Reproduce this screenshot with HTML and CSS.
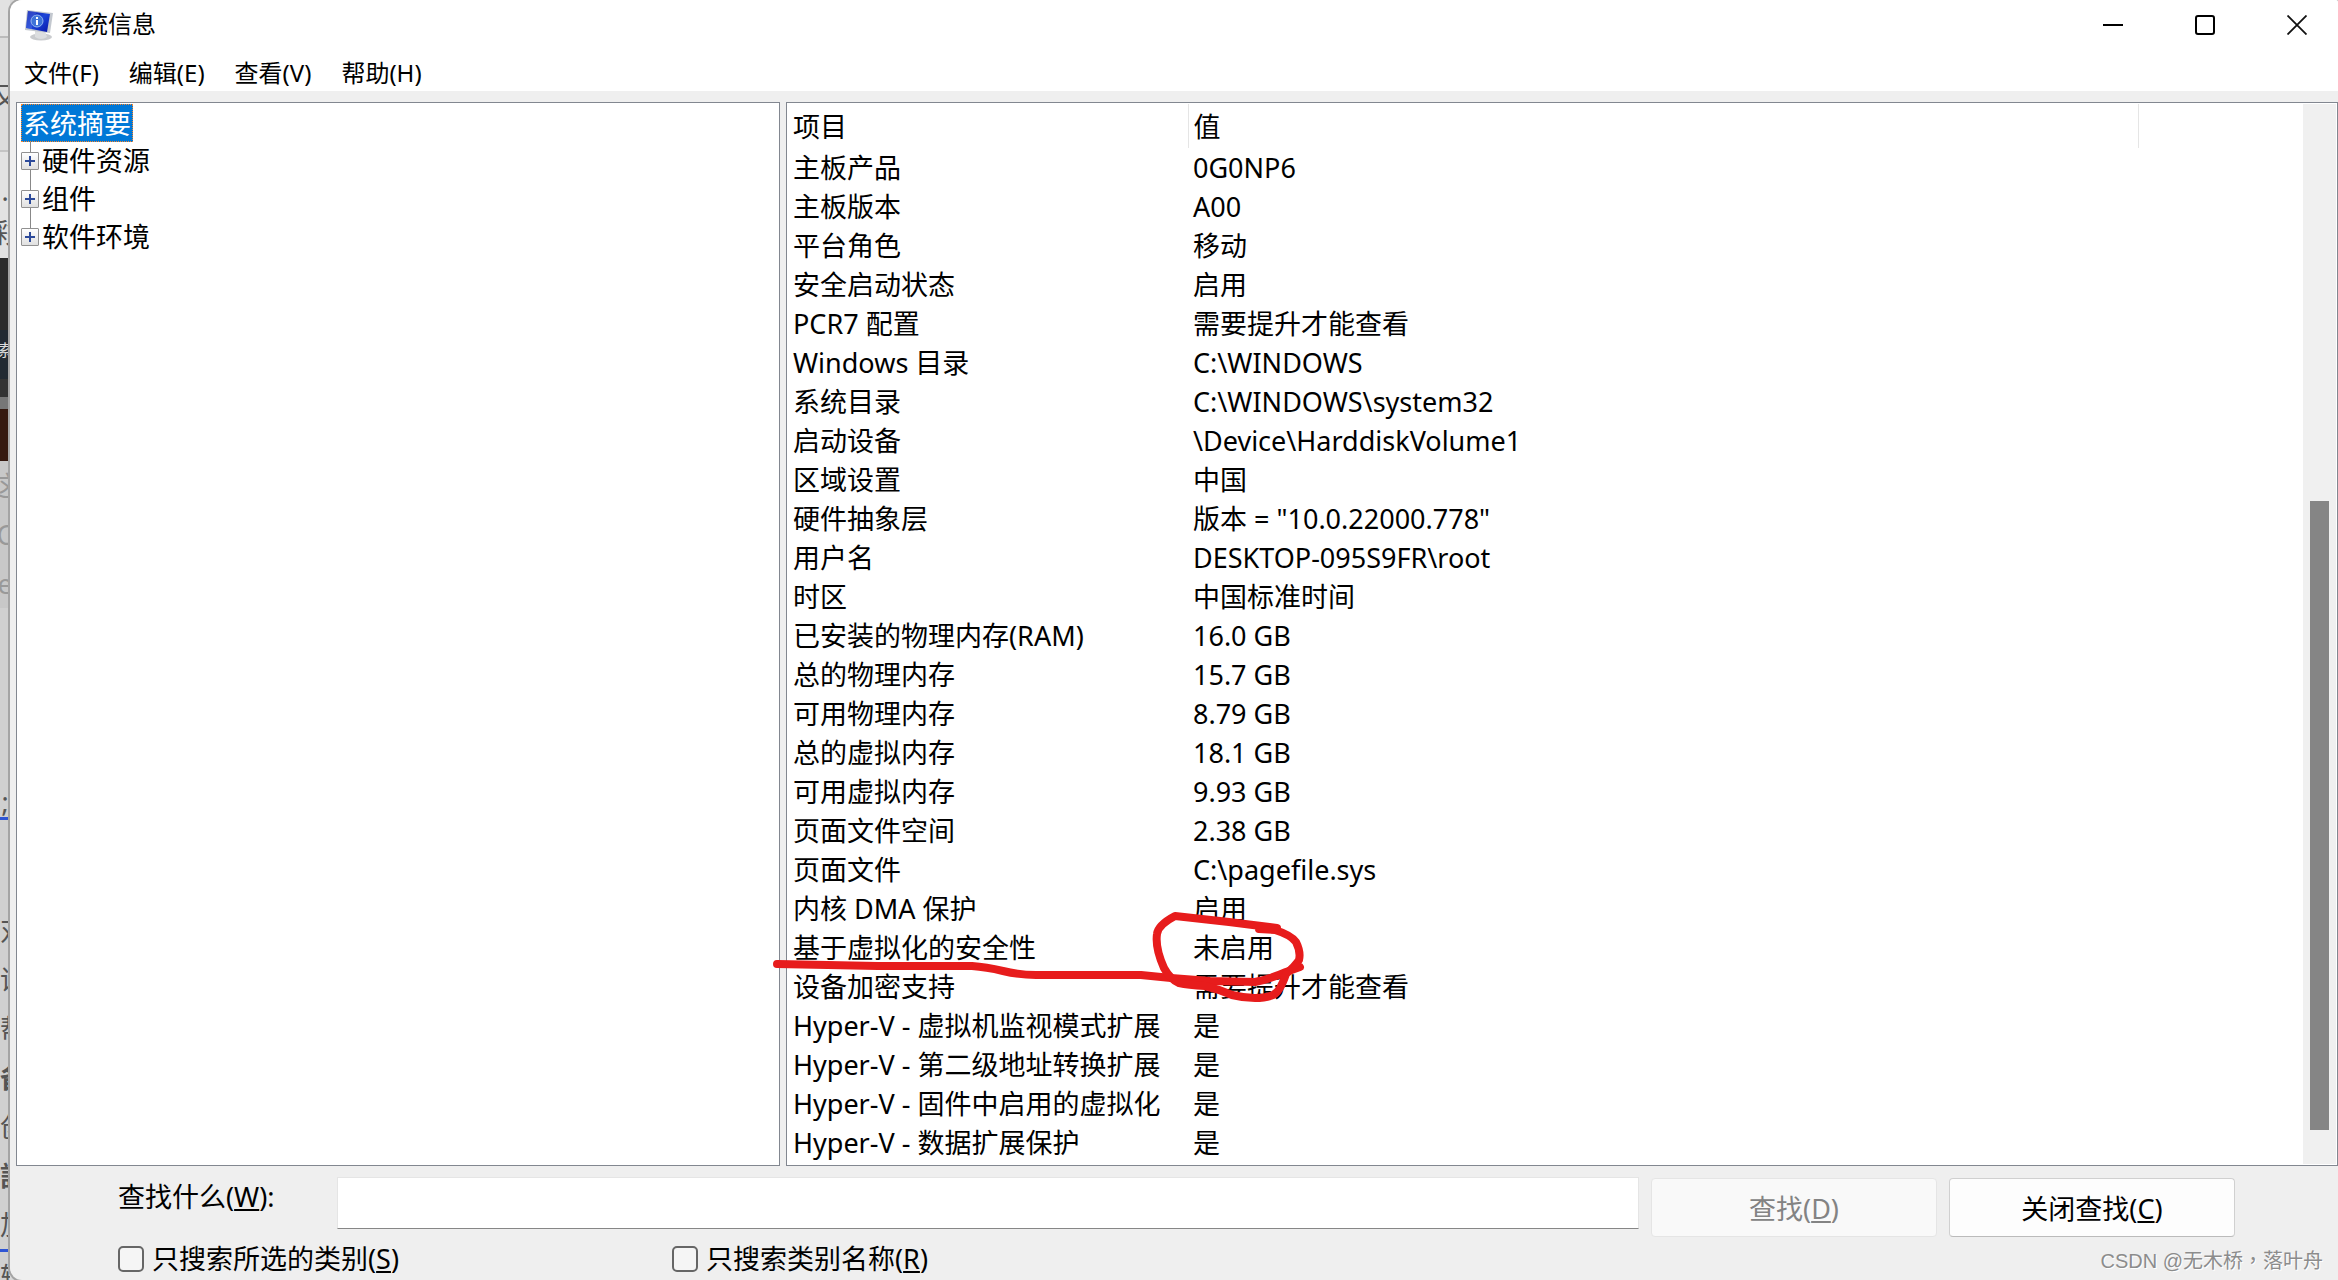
FILE: index.html
```html
<!DOCTYPE html>
<html lang="zh-CN">
    <head>
        <meta charset="utf-8">
        <title>系统信息</title>
        <link rel="stylesheet" href="styles.css">
    </head>
    <body>
        <div class="desktop" aria-hidden="true">
            <div class="strip strip-top"></div>
            <div class="strip strip-tab"><span>又</span></div>
            <div class="strip strip-page"><span>·</span><span>彩</span></div>
            <div class="strip strip-dark"></div>
            <div class="strip strip-navy"><span>索</span></div>
            <div class="strip strip-shade"></div>
            <div class="strip strip-brown"></div>
            <div class="strip strip-fade"><span>这</span><span>C</span><span>e</span></div>
            <div class="strip strip-blank"><span>;</span></div>
            <div class="strip strip-text">
                <span>对</span><span>谁</span><span>帮</span><b>备</b><span>创</span><b>詣</b><span class="linked">加</span><span>辑</span>
            </div>
        </div>

        <div class="window">
            <header class="titlebar">
                <svg class="app-icon" viewBox="0 0 30 32" width="30" height="32">
                    <defs>
                        <linearGradient id="screen" x1="0" y1="0" x2="1" y2="1">
                            <stop offset="0" stop-color="#0a14a0"/>
                            <stop offset="0.5" stop-color="#1c45d8"/>
                            <stop offset="1" stop-color="#0614a8"/>
                        </linearGradient>
                    </defs>
                    <ellipse cx="17" cy="28" rx="11" ry="3.5" fill="#c9cbce"/>
                    <path d="M11 20l10 2 2 6q-6 4-12 0z" fill="#dcdee0"/>
                    <path d="M3 1l26 3-3 20L1 21z" fill="#c3c8cf"/>
                    <path d="M4 2l22 3-3 18L2 19z" fill="url(#screen)"/>
                    <path d="M2 19L4 2l9 1q-6 6-5 17z" fill="#5a7be8" opacity="0.4"/>
                    <circle cx="13" cy="12" r="6" fill="#3f74d8" stroke="#93b5f0"/>
                    <path d="M13 8v2M13 11v5" stroke="#fff" stroke-width="2"/>
                </svg>
                <span class="title">系统信息</span>
                <div class="window-buttons">
                    <button aria-label="最小化"><svg width="20" height="20"><path d="M0 10h20" stroke="#000" stroke-width="2"/></svg></button>
                    <button aria-label="最大化"><svg width="20" height="20"><rect x="1" y="1" width="18" height="18" rx="2" fill="none" stroke="#000" stroke-width="2"/></svg></button>
                    <button aria-label="关闭"><svg width="20" height="20"><path d="M0.5 0.5l19 19M19.5 0.5l-19 19" stroke="#111" stroke-width="1.8"/></svg></button>
                </div>
            </header>

            <nav class="menu">
                <button>文件(F)</button>
                <button>编辑(E)</button>
                <button>查看(V)</button>
                <button>帮助(H)</button>
            </nav>

            <main class="panes">
                <ul class="tree">
                    <li><a href="#" class="selected">系统摘要</a></li>
                    <li class="branch"><button class="expand" aria-label="展开"></button><a href="#">硬件资源</a></li>
                    <li class="branch"><button class="expand" aria-label="展开"></button><a href="#">组件</a></li>
                    <li class="branch"><button class="expand" aria-label="展开"></button><a href="#">软件环境</a></li>
                </ul>

                <section class="details">
                    <table>
                        <thead>
                            <tr><th class="col-item">项目</th><th class="col-value">值</th><th></th></tr>
                        </thead>
                        <tbody>
                            <tr><td>主板产品</td><td>0G0NP6</td></tr>
                            <tr><td>主板版本</td><td>A00</td></tr>
                            <tr><td>平台角色</td><td>移动</td></tr>
                            <tr><td>安全启动状态</td><td>启用</td></tr>
                            <tr><td>PCR7 配置</td><td>需要提升才能查看</td></tr>
                            <tr><td>Windows 目录</td><td>C:\WINDOWS</td></tr>
                            <tr><td>系统目录</td><td>C:\WINDOWS\system32</td></tr>
                            <tr><td>启动设备</td><td>\Device\HarddiskVolume1</td></tr>
                            <tr><td>区域设置</td><td>中国</td></tr>
                            <tr><td>硬件抽象层</td><td>版本 = "10.0.22000.778"</td></tr>
                            <tr><td>用户名</td><td>DESKTOP-095S9FR\root</td></tr>
                            <tr><td>时区</td><td>中国标准时间</td></tr>
                            <tr><td>已安装的物理内存(RAM)</td><td>16.0 GB</td></tr>
                            <tr><td>总的物理内存</td><td>15.7 GB</td></tr>
                            <tr><td>可用物理内存</td><td>8.79 GB</td></tr>
                            <tr><td>总的虚拟内存</td><td>18.1 GB</td></tr>
                            <tr><td>可用虚拟内存</td><td>9.93 GB</td></tr>
                            <tr><td>页面文件空间</td><td>2.38 GB</td></tr>
                            <tr><td>页面文件</td><td>C:\pagefile.sys</td></tr>
                            <tr><td>内核 DMA 保护</td><td>启用</td></tr>
                            <tr><td>基于虚拟化的安全性</td><td>未启用</td></tr>
                            <tr><td>设备加密支持</td><td>需要提升才能查看</td></tr>
                            <tr><td>Hyper-V - 虚拟机监视模式扩展</td><td>是</td></tr>
                            <tr><td>Hyper-V - 第二级地址转换扩展</td><td>是</td></tr>
                            <tr><td>Hyper-V - 固件中启用的虚拟化</td><td>是</td></tr>
                            <tr><td>Hyper-V - 数据扩展保护</td><td>是</td></tr>
                        </tbody>
                    </table>
                    <div class="scrollbar"><div class="thumb"></div></div>

                    <!-- red pen marks -->
                    <svg class="marks" viewBox="765 905 560 105" width="560" height="105">
                        <path d="M779 964L880 966L974 966Q988 967 1005 971Q1022 975 1038 975L1143 975L1173 978L1212 981L1257 982Q1272 979 1288 972L1302 967"/>
                        <path d="M1261 929L1277 930Q1293 935 1298 942Q1303 952 1301 960Q1298 965 1288 974Q1282 992 1275 995Q1268 998 1257 998Q1246 998 1234 995Q1220 989 1207 986Q1190 985 1181 983Q1172 979 1166 968Q1157 948 1159 934Q1160 925 1177 916L1231 922L1279 928"/>
                    </svg>
                </section>
            </main>

            <form class="find">
                <div class="find-row">
                    <label class="find-label" for="what">查找什么(<u>W</u>):</label>
                    <input type="text" id="what">
                    <button type="button" disabled>查找(<u>D</u>)</button>
                    <button type="button">关闭查找(<u>C</u>)</button>
                </div>
                <div class="check-row">
                    <div class="check"><input type="checkbox" id="selectedOnly"><label for="selectedOnly">只搜索所选的类别(<u>S</u>)</label></div>
                    <div class="check"><input type="checkbox" id="namesOnly"><label for="namesOnly">只搜索类别名称(<u>R</u>)</label></div>
                    <span class="watermark" lang="zh-TW">CSDN @无木桥，落叶舟</span>
                </div>
            </form>
        </div>
    </body>
</html>
```
FILE: styles.css
```css
* {
    box-sizing: border-box;
}

body {
    display: flex;
    height: 100vh;
    margin: 0;
    overflow: hidden;
    background-color: #d8d8d8;
    color: #000;
    font-family: "Noto Sans", "Noto Sans CJK SC", sans-serif;
    font-size: 27px;
}

button,
input {
    font: inherit;
    color: inherit;
}

/* page behind the window */
.desktop {
    width: 10px;
    flex: none;
    height: 100vh;
    overflow: hidden;
    background-color: #d0d0d0;
    color: #555;
}

.strip {
    display: flex;
    flex-direction: column;
    align-items: center;
    overflow: hidden;
    line-height: 40px;
}

.strip-top {
    height: 38px;
    background-color: #e2e2e2;
    border-bottom: 2px solid #bbb;
}

.strip-tab {
    height: 114px;
    padding-top: 38px;
    background-color: #dcdcdc;
    border-bottom: 2px solid #c4c4c4;
}

.strip-page {
    height: 106px;
    padding-top: 30px;
    background-color: #e2e2e2;
    line-height: 34px;
}

.strip-dark {
    height: 72px;
    background-color: #2c2c2c;
}

.strip-navy {
    height: 49px;
    background-color: #222a32;
    color: #ddd;
    font-size: 16px;
}

.strip-shade {
    height: 30px;
    background-color: #333;
    border-bottom: 12px solid #777;
}

.strip-brown {
    height: 52px;
    background-color: #35190f;
}

.strip-fade {
    height: 147px;
    background-color: #c8c8c8;
    color: #999;
    line-height: 49px;
}

.strip-blank {
    height: 212px;
    padding-top: 174px;
    background-color: #d0d0d0;
    border-bottom: 3px solid #2f55d4;
}

.strip-text {
    align-items: flex-start;
    padding-top: 86px;
    line-height: 49px;
}

.linked {
    border-bottom: 3px solid #2f55d4;
}

.window {
    display: flex;
    flex: 1;
    flex-direction: column;
    min-width: 0;
    background-color: #efefef;
    border-radius: 12px 2px 0 12px;
    box-shadow: 0 0 0 2px #a4a4a4;
    z-index: 1;
}

.titlebar {
    display: flex;
    align-items: center;
    height: 50px;
    padding-left: 14px;
    background-color: #fff;
    border-radius: 12px 2px 0 0;
    font-size: 24px;
    line-height: 32px;
}

.title {
    margin-left: 6px;
    padding-bottom: 2px;
}

.window-buttons {
    display: flex;
    gap: 10px;
    margin-left: auto;
}

.window-buttons button {
    display: flex;
    align-items: center;
    justify-content: center;
    width: 82px;
    height: 50px;
    padding: 0;
    border: none;
    background: none;
}

.menu {
    display: flex;
    gap: 30px;
    height: 41px;
    padding-left: 14px;
    background-color: #fff;
    font-size: 24px;
}

.menu button {
    height: 46px;
    padding: 0;
    border: none;
    background: none;
    line-height: 46px;
}

.panes {
    display: grid;
    grid-template-columns: 764fr 1552fr;
    gap: 6px;
    flex: 1;
    min-height: 0;
    padding: 11px 0 0 6px;
}

.tree,
.details {
    background-color: #fff;
    border: 1px solid #828790;
}

.tree {
    margin: 0;
    padding: 1px 4px;
    list-style: none;
    line-height: 38px;
}

.tree li {
    display: flex;
    align-items: center;
    height: 38px;
}

.tree a {
    color: #000;
    text-decoration: none;
}

.tree .selected {
    height: 38px;
    padding: 0 1px;
    background-color: #0078d7;
    border: 1px dotted #ff8728;
    color: #fff;
}

.branch {
    gap: 3px;
    background: linear-gradient(#888, #888) 9px 0 / 1px 100% no-repeat;
}

.branch:last-child {
    background-size: 1px 50%;
}

.expand {
    width: 18px;
    height: 18px;
    padding: 0;
    border: 1px solid #919191;
    border-radius: 1px;
    background:
        linear-gradient(#2c4a9a, #2c4a9a) center / 10px 2px no-repeat,
        linear-gradient(#2c4a9a, #2c4a9a) center / 2px 10px no-repeat,
        linear-gradient(#fff, #e0e0e0);
}

.details {
    position: relative;
    display: flex;
    padding: 1px;
}

table {
    flex: 1;
    align-self: flex-start;
    table-layout: fixed;
    border-collapse: collapse;
}

th,
td {
    padding: 0 0 0 5px;
    text-align: left;
    white-space: nowrap;
    font-weight: normal;
    line-height: 39px;
}

th {
    height: 44px;
}

.col-item {
    width: 400px;
    border-right: 1px solid #e5e5e5;
}

.col-value {
    width: 950px;
    border-right: 1px solid #e5e5e5;
}

.scrollbar {
    width: 33px;
    padding: 397px 7px 34px;
    background-color: #f0f0f0;
}

.thumb {
    height: 100%;
    background-color: #858585;
}

.marks {
    position: absolute;
    left: -24px;
    top: 802px;
    fill: none;
    stroke: #e71c1c;
    stroke-width: 8px;
    stroke-linecap: round;
    stroke-linejoin: round;
}

.find {
    padding: 11px 103px 0 108px;
}

.find-row {
    display: flex;
    align-items: flex-start;
    gap: 12px;
}

.find-label {
    width: 207px;
    line-height: 40px;
}

.find-row input {
    flex: 1;
    min-width: 0;
    height: 52px;
    border: 1px solid #e5e5e5;
    border-bottom: 1px solid #868686;
    background-color: #fff;
}

.find-row button {
    width: 286px;
    height: 59px;
    margin-top: 1px;
    padding: 0;
    border: 1px solid #d0d0d0;
    border-bottom-color: #bbb;
    border-radius: 4px;
    background-color: #fdfdfd;
}

.find-row button:disabled {
    border-color: #e5e5e5;
    background-color: #f9f9f9;
    color: #838383;
}

.check-row {
    display: flex;
    height: 43px;
    margin-right: -88px;
    line-height: 44px;
}

.check {
    display: flex;
    align-items: center;
    gap: 8px;
    width: 554px;
}

.check input {
    appearance: none;
    width: 26px;
    height: 26px;
    margin: 0;
    border: 2px solid #666;
    border-radius: 5px;
    background-color: #f5f5f5;
}

.watermark {
    margin-left: auto;
    color: #8c8c8c;
    font-family: "Liberation Sans", "Noto Sans CJK TC", sans-serif;
    font-size: 20px;
    line-height: 48px;
    text-shadow: 1px 1px 0 #fff;
}
```
